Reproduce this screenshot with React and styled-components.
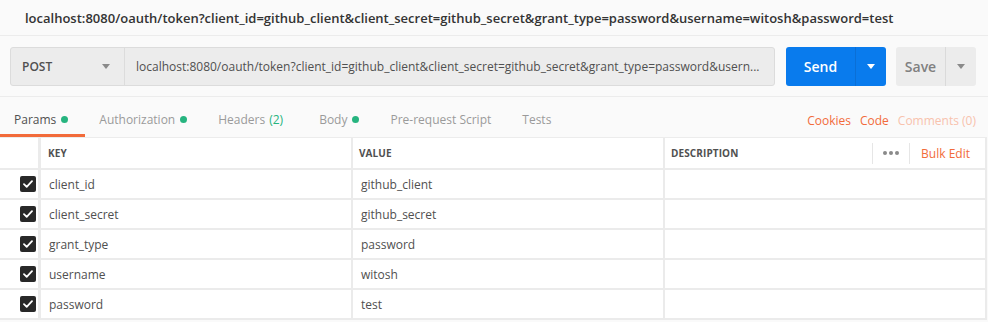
import React from "react";
import styled, { createGlobalStyle } from "styled-components";

const GlobalStyle = createGlobalStyle`
  body {
    margin: 0;
    background: #fafafa;
    font-family: "Open Sans", "Noto Sans", sans-serif;
    color: #505050;
  }
`;

const Page = styled.div`
  width: 988px;
  height: 322px;
  overflow: hidden;
  background: #fafafa;
`;

const TitleBar = styled.div`
  height: 35px;
  padding-left: 25px;
  display: flex;
  align-items: center;
  font-size: 13px;
  font-weight: 600;
  color: #333;
  border-bottom: 1px solid #ececec;
  white-space: nowrap;
`;

const RequestBar = styled.div`
  display: flex;
  align-items: center;
  padding: 11px 12px 10px 10px;
  border-bottom: 1px solid #ececec;
`;

const UrlGroup = styled.div`
  flex: 1;
  display: flex;
  height: 37px;
  border: 1px solid #dcdcdc;
  border-radius: 3px;
  background: #ececec;
  overflow: hidden;
`;

const Method = styled.div`
  width: 114px;
  box-sizing: border-box;
  display: flex;
  align-items: center;
  justify-content: space-between;
  padding: 0 14px 0 11px;
  font-size: 12px;
  font-weight: 600;
  color: #505050;
  border-right: 1px solid #dcdcdc;
`;

const UrlText = styled.div`
  flex: 1;
  display: flex;
  align-items: center;
  padding: 0 12px 0 11px;
  font-size: 12px;
  color: #505050;
  white-space: nowrap;
  overflow: hidden;
`;

const Caret = styled.span`
  display: inline-block;
  width: 0;
  height: 0;
  border-left: 4px solid transparent;
  border-right: 4px solid transparent;
  border-top: 5px solid ${(p) => p.color || "#8a8a8a"};
`;

const SplitButton = styled.div`
  display: flex;
  height: 39px;
  margin-left: ${(p) => p.gap}px;
  border-radius: 3px;
  overflow: hidden;
  background: ${(p) => (p.primary ? "#097bed" : "#ececec")};
  color: ${(p) => (p.primary ? "#fff" : "#808080")};
`;

const ButtonMain = styled.div`
  width: ${(p) => p.width}px;
  display: flex;
  align-items: center;
  justify-content: center;
  font-size: 14px;
  font-weight: 600;
  border-right: 1px solid ${(p) => (p.primary ? "#0a6fd6" : "#dadada")};
`;

const ButtonCaret = styled.div`
  width: 30px;
  display: flex;
  align-items: center;
  justify-content: center;
`;

const TabBar = styled.div`
  height: 40px;
  display: flex;
  align-items: stretch;
  justify-content: space-between;
  padding-right: 12px;
`;

const TabList = styled.div`
  display: flex;
`;

const Tab = styled.div`
  display: flex;
  align-items: center;
  padding: 8px ${(p) => 17 + (p.extra || 0)}px 0 14px;
  font-size: 12px;
  color: ${(p) => (p.active ? "#505050" : "#9a9a9a")};
  border-bottom: 3px solid ${(p) => (p.active ? "#f26b3a" : "transparent")};
`;

const Dot = styled.span`
  width: 7px;
  height: 7px;
  border-radius: 50%;
  background: #26b47f;
  margin-left: 5px;
`;

const Count = styled.span`
  color: #26b47f;
  margin-left: 4px;
`;

const Links = styled.div`
  display: flex;
  align-items: center;
  gap: 9px;
  padding-top: 6px;
  font-size: 12px;
`;

const Link = styled.span`
  color: ${(p) => (p.faded ? "#f8c2ad" : "#f26b3a")};
`;

const Table = styled.div`
  width: 987px;
  background: #fff;
  border-top: 1px solid #ececec;
`;

const Row = styled.div`
  display: flex;
  height: ${(p) => (p.header ? 30 : 28)}px;
  border-bottom: 2px solid #ebebeb;
`;

const Cell = styled.div`
  display: flex;
  align-items: center;
  box-sizing: content-box;
  width: ${(p) => p.width}px;
  padding-left: ${(p) => p.pad || 0}px;
  border-left: ${(p) => p.line || 0}px solid #ebebeb;
  border-right: ${(p) => (p.last ? 2 : 0)}px solid #ebebeb;
  font-size: 12px;
  color: #505050;
  white-space: nowrap;
`;

const HeadLabel = styled.span`
  font-size: 10px;
  font-weight: 700;
  color: #505050;
  letter-spacing: 0.1px;
`;

const HeadTools = styled.div`
  margin-left: auto;
  display: flex;
  align-items: center;
  height: 100%;
`;

const ToolSep = styled.span`
  width: 1px;
  height: 21px;
  background: #e6e6e6;
`;

const More = styled.span`
  width: 36px;
  display: flex;
  justify-content: center;
  gap: 2px;
  & > i {
    width: 4px;
    height: 4px;
    border-radius: 50%;
    background: #8a8a8a;
  }
`;

const BulkEdit = styled.span`
  color: #f26b3a;
  font-size: 12px;
  padding: 0 15px 0 11px;
`;

const CheckCell = styled.div`
  width: 38px;
  display: flex;
  align-items: center;
  justify-content: flex-end;
  padding-right: 2px;
  box-sizing: border-box;
`;

const Check = styled.span`
  width: 16px;
  height: 16px;
  border-radius: 2px;
  background: #282828;
  display: flex;
  align-items: center;
  justify-content: center;
`;

const params = [
  ["client_id", "github_client"],
  ["client_secret", "github_secret"],
  ["grant_type", "password"],
  ["username", "witosh"],
  ["password", "test"],
];

const url =
  "localhost:8080/oauth/token?client_id=github_client&client_secret=github_secret&grant_type=password&username=witosh&password=test";

export default function App() {
  return (
    <Page>
      <GlobalStyle />
      <TitleBar>{url}</TitleBar>

      <RequestBar>
        <UrlGroup>
          <Method>
            POST
            <Caret />
          </Method>
          <UrlText>
            localhost:8080/oauth/token?client_id=github_client&amp;client_secret=github_secret&amp;grant_type=password&amp;usern...
          </UrlText>
        </UrlGroup>
        <SplitButton primary gap={11}>
          <ButtonMain primary width={69}>Send</ButtonMain>
          <ButtonCaret>
            <Caret color="#fff" />
          </ButtonCaret>
        </SplitButton>
        <SplitButton gap={10}>
          <ButtonMain width={49}>Save</ButtonMain>
          <ButtonCaret>
            <Caret />
          </ButtonCaret>
        </SplitButton>
      </RequestBar>

      <TabBar>
        <TabList>
          <Tab active>
            Params<Dot />
          </Tab>
          <Tab>
            Authorization<Dot />
          </Tab>
          <Tab extra={5}>
            Headers<Count>(2)</Count>
          </Tab>
          <Tab>
            Body<Dot />
          </Tab>
          <Tab>Pre-request Script</Tab>
          <Tab>Tests</Tab>
        </TabList>
        <Links>
          <Link>Cookies</Link>
          <Link>Code</Link>
          <Link faded>Comments (0)</Link>
        </Links>
      </TabBar>

      <Table>
        <Row header>
          <CheckCell />
          <Cell width={303} pad={7} line={3}>
            <HeadLabel>KEY</HeadLabel>
          </Cell>
          <Cell width={304} pad={6} line={2}>
            <HeadLabel>VALUE</HeadLabel>
          </Cell>
          <Cell width={314} pad={6} line={2} last>
            <HeadLabel>DESCRIPTION</HeadLabel>
            <HeadTools>
              <ToolSep />
              <More>
                <i />
                <i />
                <i />
              </More>
              <ToolSep />
              <BulkEdit>Bulk Edit</BulkEdit>
            </HeadTools>
          </Cell>
        </Row>
        {params.map(([key, value]) => (
          <Row key={key}>
            <CheckCell>
              <Check>
                <svg width="10" height="8" viewBox="0 0 10 8">
                  <path
                    d="M1 4.2 L3.7 6.8 L9 1.2"
                    fill="none"
                    stroke="#fff"
                    strokeWidth="1.8"
                    strokeLinecap="round"
                    strokeLinejoin="round"
                  />
                </svg>
              </Check>
            </CheckCell>
            <Cell width={302} pad={8} line={3}>
              {key}
            </Cell>
            <Cell width={302} pad={8} line={2}>
              {value}
            </Cell>
            <Cell width={320} line={2} last />
          </Row>
        ))}
      </Table>
    </Page>
  );
}
